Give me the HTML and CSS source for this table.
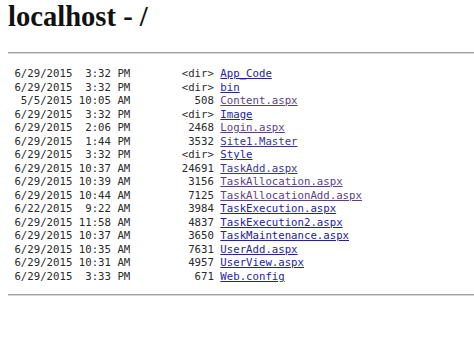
FILE: index.html
```html
<!DOCTYPE html>
<html>
<head>
<meta charset="utf-8">
<title>localhost - /</title>
<link rel="stylesheet" href="styles.css">
</head>
<body>
<h1 class="title">localhost - /</h1>
<hr class="rule rule-top">
<pre class="listing"> 6/29/2015  3:32 PM        &lt;dir&gt; <a class="link" href="#">App_Code</a>
 6/29/2015  3:32 PM        &lt;dir&gt; <a class="link" href="#">bin</a>
  5/5/2015 10:05 AM          508 <a class="link visited" href="#">Content.aspx</a>
 6/29/2015  3:32 PM        &lt;dir&gt; <a class="link" href="#">Image</a>
 6/29/2015  2:06 PM         2468 <a class="link visited" href="#">Login.aspx</a>
 6/29/2015  1:44 PM         3532 <a class="link mixed" href="#">Site1.Master</a>
 6/29/2015  3:32 PM        &lt;dir&gt; <a class="link" href="#">Style</a>
 6/29/2015 10:37 AM        24691 <a class="link mixed" href="#">TaskAdd.aspx</a>
 6/29/2015 10:39 AM         3156 <a class="link visited" href="#">TaskAllocation.aspx</a>
 6/29/2015 10:44 AM         7125 <a class="link visited" href="#">TaskAllocationAdd.aspx</a>
 6/22/2015  9:22 AM         3984 <a class="link" href="#">TaskExecution.aspx</a>
 6/29/2015 11:58 AM         4837 <a class="link" href="#">TaskExecution2.aspx</a>
 6/29/2015 10:37 AM         3650 <a class="link" href="#">TaskMaintenance.aspx</a>
 6/29/2015 10:35 AM         7631 <a class="link" href="#">UserAdd.aspx</a>
 6/29/2015 10:31 AM         4957 <a class="link" href="#">UserView.aspx</a>
 6/29/2015  3:33 PM          671 <a class="link" href="#">Web.config</a></pre>
<hr class="rule rule-bottom">
</body>
</html>
```

FILE: styles.css
```css
html, body {
  background: #ffffff;
}

body {
  margin: 0;
  padding: 1px 0 0 8px;
}

.title {
  margin: 0;
  font-family: "Liberation Serif", "Times New Roman", serif;
  font-weight: bold;
  font-size: 28.6px;
  line-height: 32px;
  color: #111111;
}

.rule {
  margin: 0;
  height: 0;
  border: 0;
  border-top: 1px solid #a0a0a0;
  border-bottom: 1px solid #d8d8d8;
}

.rule-top {
  margin-top: 19px;
}

.rule-bottom {
  margin-top: 10px;
}

.listing {
  margin: 13px 0 0 0;
  font-family: "DejaVu Sans Mono", monospace;
  font-size: 10.7px;
  line-height: 13.53px;
  color: #2a2a2a;
}

.link {
  color: #23239e;
  text-decoration: underline;
}

.link.visited {
  color: #5a3f85;
}

.link.mixed {
  color: #3a3596;
}
```
